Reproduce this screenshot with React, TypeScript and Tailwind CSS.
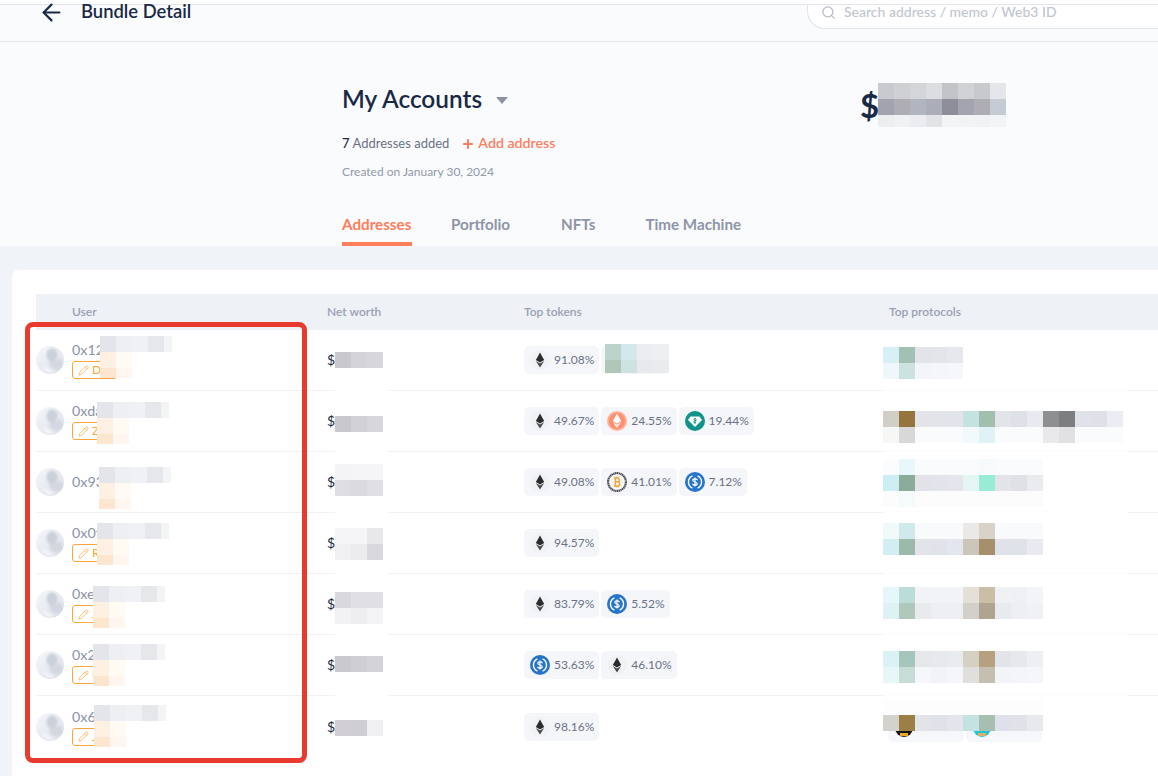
import { ArrowLeft, Pencil, Plus, Search } from "lucide-react";

type IconName = "eth" | "orange" | "gem" | "btc" | "usdc";

interface Token {
  icon: IconName;
  pct: string;
}

interface RowData {
  addr: string;
  badge?: string;
  userPos: string;
  tokens: Token[];
  worthPos: string;
  worth: string[][];
  protoPos: string;
  proto: string[][];
}

const EthShape = ({ top, bottom }: { top: string; bottom: string }) => (
  <>
    <path d="M10 2.500 5.800 10 10 12.600 14.200 10Z" fill={top} />
    <path d="M10 13.600 5.800 11 10 17.500 14.200 11Z" fill={bottom} />
  </>
);

const TokenIcon = ({ icon }: { icon: IconName }) => {
  if (icon === "eth")
    return (
      <svg viewBox="0 0 20 20" className="w-5 h-5 shrink-0">
        <circle cx="10" cy="10" r="10" fill="#f1f2f6" />
        <EthShape top="#2c2c2e" bottom="#4a4a4c" />
      </svg>
    );
  if (icon === "orange")
    return (
      <svg viewBox="0 0 20 20" className="w-5 h-5 shrink-0">
        <circle cx="10" cy="10" r="10" fill="#ffb296" />
        <circle cx="10" cy="10" r="8.200" fill="#ff906f" />
        <EthShape top="#ffffff" bottom="#ffe6dc" />
      </svg>
    );
  if (icon === "gem")
    return (
      <svg viewBox="0 0 20 20" className="w-5 h-5 shrink-0">
        <circle cx="10" cy="10" r="10" fill="#0d958c" />
        <path d="M5.500 5.500h9L17 9l-7 7-7-7Z" fill="#ffffff" />
        <path d="M10 7v6M8.600 8.600c0-1 2.800-1 2.800.2 0 1.300-2.800.6-2.800 2 0 1 2.800 1 2.800 0" stroke="#0d958c" strokeWidth="0.9" fill="none" />
      </svg>
    );
  if (icon === "btc")
    return (
      <svg viewBox="0 0 20 20" className="w-5 h-5 shrink-0">
        <circle cx="10" cy="10" r="8.900" fill="#ffffff" stroke="#4f4c56" strokeWidth="2.200" strokeDasharray="1.400 0.400" />
        <circle cx="10" cy="10" r="6.400" fill="#f5f3f0" />
        <path d="M8.400 6v8M8.400 6h2.200c2.200 0 2.200 3.800 0 3.800H8.400m2.200 0c2.600 0 2.600 4.200 0 4.200H8.400M7 6h1.400M7 14h1.400M9.400 4.800v1.200M9.400 14v1.200M11 4.800v1.200M11 14v1.200" stroke="#f2a33c" strokeWidth="1.400" fill="none" />
      </svg>
    );
  return (
    <svg viewBox="0 0 20 20" className="w-5 h-5 shrink-0">
      <circle cx="10" cy="10" r="10" fill="#2775ca" />
      <path d="M7.400 3.900a6.700 6.700 0 0 0 0 12.200M12.600 3.900a6.700 6.700 0 0 1 0 12.200" stroke="#ffffff" strokeWidth="1.400" fill="none" />
      <path d="M10 5.600v8.800M12.200 8.200c0-1.900-4.400-1.900-4.400 0 0 2.200 4.400 1.400 4.400 3.600 0 1.900-4.400 1.900-4.400 0" stroke="#ffffff" strokeWidth="1.200" fill="none" />
    </svg>
  );
};

const Avatar = () => (
  <svg viewBox="0 0 28 28" className="w-7 h-7 shrink-0">
    <defs>
      <linearGradient id="avatarBg" x1="0.1" y1="0.1" x2="0.85" y2="0.95">
        <stop offset="0" stopColor="#f3f5f9" />
        <stop offset="1" stopColor="#dde1e9" />
      </linearGradient>
      <filter id="avatarBlur" x="-20%" y="-20%" width="140%" height="140%">
        <feGaussianBlur stdDeviation="0.9" />
      </filter>
      <clipPath id="avatarClip">
        <circle cx="14" cy="14" r="14" />
      </clipPath>
    </defs>
    <circle cx="14" cy="14" r="14" fill="url(#avatarBg)" />
    <g clipPath="url(#avatarClip)" filter="url(#avatarBlur)">
      <ellipse cx="16" cy="9" rx="5.500" ry="6.500" fill="#cbd0d9" />
      <path d="M13 14c3 2 8 1 10-2 3 2 5 6 4 10l-7 1c-4 0-7-3-7-9Z" fill="#d3d7df" />
      <path d="M6 20c3 0 4 2 6 3 2 0 4 2 6 3-4 2-9 0-12-6Z" fill="#f6f7fa" />
    </g>
  </svg>
);

const Mosaic = ({ rows, className, lastRow = "h-4" }: { rows: string[][]; className: string; lastRow?: string }) => (
  <div className={`absolute flex flex-col ${className}`}>
    {rows.map((row, i) => (
      <div key={i} className={`flex ${i === rows.length - 1 ? lastRow : "h-4"}`}>
        {row.map((color, j) => (
          <div key={j} className={`w-4 h-full ${color}`} />
        ))}
      </div>
    ))}
  </div>
);

const UserMosaic = ({ className }: { className: string }) => (
  <div className={`absolute flex flex-col ${className}`}>
    <div className="flex h-4">
      <div className="w-4 bg-[#e4e5ea]" />
      <div className="w-4 bg-[#eeeff3]" />
      <div className="w-4 bg-[#f0f1f4]" />
      <div className="w-4 bg-[#e6e7eb]" />
      <div className="w-2 bg-[#f3f4f6]" />
    </div>
    <div className="flex h-4">
      <div className="w-4 bg-[#fef0e2]" />
      <div className="w-4 bg-[#fffaf3]" />
    </div>
    <div className="flex h-[10px]">
      <div className="w-4 bg-[#fde6d0]" />
      <div className="w-4 bg-[#fff7ef]" />
    </div>
  </div>
);

const rows: RowData[] = [
  {
    addr: "0x12",
    badge: "D",
    userPos: "left-[64px] top-[6px]",
    tokens: [{ icon: "eth", pct: "91.08%" }],
    worthPos: "left-[299px] top-[22px]",
    worth: [["bg-[#c9c8ce]", "bg-[#d3d3d8]", "bg-[#d6d6db]"]],
    protoPos: "left-[847px] top-[17px]",
    proto: [
      ["bg-[#d6f0f5]", "bg-[#a3c0b4]", "bg-[#e3e4e9]", "bg-[#e3e5ea]", "bg-[#e6e8ee]"],
      ["bg-[#eef8fb]", "bg-[#cae3df]", "bg-[#f4f5f9]", "bg-[#f5f6fa]", "bg-[#f6f7fb]"],
    ],
  },
  {
    addr: "0xda",
    badge: "Z",
    userPos: "left-[61px] top-[11px]",
    tokens: [
      { icon: "eth", pct: "49.67%" },
      { icon: "orange", pct: "24.55%" },
      { icon: "gem", pct: "19.44%" },
    ],
    worthPos: "left-[299px] top-[25px]",
    worth: [["bg-[#c9c8ce]", "bg-[#d2d1d7]", "bg-[#d6d6db]"]],
    protoPos: "left-[847px] top-[20px]",
    proto: [
      ["bg-[#d2cec8]", "bg-[#95743d]", "bg-[#e3e4e9]", "bg-[#e3e4ea]", "bg-[#e2e4ec]", "bg-[#c3e2e0]", "bg-[#a2bfae]", "bg-[#e3e4e9]", "bg-[#dfe1e8]", "bg-[#e9eaef]", "bg-[#8e8f91]", "bg-[#7d7e80]", "bg-[#e0e2ea]", "bg-[#e0e1e8]", "bg-[#ecedf2]"],
      ["bg-[#f7f7f6]", "bg-[#d8d8d8]", "bg-[#fafbfc]", "bg-[#fafbfc]", "bg-[#fafbfc]", "bg-[#f1f9fa]", "bg-[#dff3f6]", "bg-[#fafbfc]", "bg-[#fafbfc]", "bg-[#fafbfc]", "bg-[#e9e9eb]", "bg-[#e1e1e3]", "bg-[#fafbfc]", "bg-[#fafbfc]", "bg-[#fafbfc]"],
    ],
  },
  {
    addr: "0x93",
    userPos: "left-[63px] top-[15px]",
    tokens: [
      { icon: "eth", pct: "49.08%" },
      { icon: "btc", pct: "41.01%" },
      { icon: "usdc", pct: "7.12%" },
    ],
    worthPos: "left-[299px] top-[12px]",
    worth: [
      ["bg-[#f4f4f6]", "bg-[#f5f5f7]", "bg-[#f5f5f7]"],
      ["bg-[#dedde1]", "bg-[#dbdbdf]", "bg-[#e0dfe3]"],
    ],
    protoPos: "left-[847px] top-[7px]",
    proto: [
      ["bg-[#fbfcfd]", "bg-[#e8f7fb]", "bg-[#fafbfd]", "bg-[#fafbfd]", "bg-[#fafbfd]", "bg-[#fafbfd]", "bg-[#f6fafb]", "bg-[#fafbfd]", "bg-[#fafbfd]", "bg-[#fafbfd]"],
      ["bg-[#cdeef2]", "bg-[#8bac98]", "bg-[#e2e3e9]", "bg-[#e2e4ec]", "bg-[#e5e6ec]", "bg-[#e4f5f3]", "bg-[#98ecd5]", "bg-[#e3e4e9]", "bg-[#e0e1e6]", "bg-[#eaebef]"],
      ["bg-[#fcfcfc]", "bg-[#f5fbfb]", "bg-[#fcfcfc]", "bg-[#fcfcfc]", "bg-[#fcfcfc]", "bg-[#fcfcfc]", "bg-[#fcfcfc]", "bg-[#fcfcfc]", "bg-[#fcfcfc]", "bg-[#fcfcfc]"],
    ],
  },
  {
    addr: "0x0f",
    badge: "R",
    userPos: "left-[61px] top-[10px]",
    tokens: [{ icon: "eth", pct: "94.57%" }],
    worthPos: "left-[299px] top-[15px]",
    worth: [
      ["bg-[#f5f5f7]", "bg-[#f5f5f7]", "bg-[#e8e8eb]"],
      ["bg-[#f0f0f2]", "bg-[#ececef]", "bg-[#d8d8dd]"],
    ],
    protoPos: "left-[847px] top-[10px]",
    proto: [
      ["bg-[#f0fafb]", "bg-[#d0eaec]", "bg-[#f8fafc]", "bg-[#f8fafc]", "bg-[#f8fafc]", "bg-[#ebe9e7]", "bg-[#d9d2c8]", "bg-[#f8fafb]", "bg-[#f8fafb]", "bg-[#f8fafb]"],
      ["bg-[#d3eef2]", "bg-[#9db9a9]", "bg-[#e3e4e9]", "bg-[#e0e3ea]", "bg-[#e3e6ee]", "bg-[#ccc5b9]", "bg-[#a68f6c]", "bg-[#dfe2ea]", "bg-[#e0e2ea]", "bg-[#e9eaef]"],
    ],
  },
  {
    addr: "0xe",
    badge: "J",
    userPos: "left-[57px] top-[12px]",
    tokens: [
      { icon: "eth", pct: "83.79%" },
      { icon: "usdc", pct: "5.52%" },
    ],
    worthPos: "left-[299px] top-[18px]",
    worth: [
      ["bg-[#d9d8dd]", "bg-[#e0e0e4]", "bg-[#e0dfe4]"],
      ["bg-[#f2f2f4]", "bg-[#eeeef0]", "bg-[#f4f4f6]"],
    ],
    protoPos: "left-[847px] top-[13px]",
    proto: [
      ["bg-[#e6f7fb]", "bg-[#bcdcd7]", "bg-[#f2f3f7]", "bg-[#f2f3f7]", "bg-[#f2f3f7]", "bg-[#e4dfd7]", "bg-[#cbbea7]", "bg-[#f0f1f5]", "bg-[#eff0f4]", "bg-[#f3f4f8]"],
      ["bg-[#def2f5]", "bg-[#b0c8bc]", "bg-[#e9eaee]", "bg-[#eeeff3]", "bg-[#eeeff3]", "bg-[#d3d0ca]", "bg-[#aea48f]", "bg-[#e9eaef]", "bg-[#eeeff3]", "bg-[#f0f1f4]"],
    ],
  },
  {
    addr: "0x2",
    badge: "U",
    userPos: "left-[57px] top-[9px]",
    tokens: [
      { icon: "usdc", pct: "53.63%" },
      { icon: "eth", pct: "46.10%" },
    ],
    worthPos: "left-[299px] top-[21px]",
    worth: [["bg-[#c9c9ce]", "bg-[#cfced3]", "bg-[#d3d3d8]"]],
    protoPos: "left-[847px] top-[16px]",
    proto: [
      ["bg-[#daf1f5]", "bg-[#a7c6bb]", "bg-[#e5e7eb]", "bg-[#e8e9ed]", "bg-[#e8ecf0]", "bg-[#d6d0c3]", "bg-[#b5a180]", "bg-[#e3e4e9]", "bg-[#e7e8ec]", "bg-[#eeeff3]"],
      ["bg-[#e9f6f8]", "bg-[#c5dcd7]", "bg-[#f5f7fa]", "bg-[#f2f3f6]", "bg-[#f4f6f9]", "bg-[#e0dfdb]", "bg-[#c5bfb1]", "bg-[#f3f4f8]", "bg-[#f4f5f8]", "bg-[#f5f6fa]"],
    ],
  },
  {
    addr: "0x6",
    badge: "J",
    userPos: "left-[58px] top-[9px]",
    tokens: [{ icon: "eth", pct: "98.16%" }],
    worthPos: "left-[299px] top-[24px]",
    worth: [["bg-[#d2cfd4]", "bg-[#cfced3]", "bg-[#f0f0f2]"]],
    protoPos: "left-[847px] top-[3px]",
    proto: [
      ["bg-[#fdfdfd]", "bg-[#fdfdfd]", "bg-[#fdfdfd]", "bg-[#fdfdfd]", "bg-[#fdfdfd]", "bg-[#fdfdfd]", "bg-[#fdfdfd]", "bg-[#fdfdfd]", "bg-[#fdfdfd]", "bg-[#fdfdfd]"],
      ["bg-[#d4d2cd]", "bg-[#9c7e47]", "bg-[#e3e4e8]", "bg-[#e0e2ea]", "bg-[#e4e5ea]", "bg-[#c4e2e1]", "bg-[#a6bfb0]", "bg-[#dee1e9]", "bg-[#e1e2e7]", "bg-[#e8e9ed]"],
    ],
  },
];

const totalRows = [
  ["bg-[#c9cacf]", "bg-[#cfd0d3]", "bg-[#d4d5d9]", "bg-[#dcdde1]", "bg-[#c3c4c8]", "bg-[#d1d2d5]", "bg-[#c8c9cd]", "bg-[#e4e6ea]"],
  ["bg-[#a2a3ae]", "bg-[#aeadb3]", "bg-[#b1b5bf]", "bg-[#abaeb9]", "bg-[#8e8e9a]", "bg-[#a2a4af]", "bg-[#adadb3]", "bg-[#c6ccd5]"],
  ["bg-[#edeef0]", "bg-[#f0f1f2]", "bg-[#ebecef]", "bg-[#e2e3e6]", "bg-[#f3f4f6]", "bg-[#f2f3f5]", "bg-[#f1f2f4]", "bg-[#f3f4f5]"],
];

const tokenMosaic = [
  ["bg-[#bcd3cc]", "bg-[#d4e7ec]", "bg-[#ecedf2]", "bg-[#eeeff3]"],
  ["bg-[#b0c6b8]", "bg-[#cfe2e2]", "bg-[#e7e9ed]", "bg-[#eaebef]"],
];

const TokenPill = ({ icon, pct }: Token) => (
  <div className="flex items-center h-7 pl-1.5 pr-[5px] gap-1 rounded-[5px] bg-[#f5f6fa]">
    <TokenIcon icon={icon} />
    <span className="text-xs text-[#6a7187]">{pct}</span>
  </div>
);

const Row = ({ row, index }: { row: RowData; index: number }) => {
  const last = index === rows.length - 1;
  return (
    <div className={`relative grid grid-cols-[291px_197px_360px_1fr] h-[61px] items-center ${last ? "" : "border-b border-[#f0f1f6]"}`}>
      <div className="flex items-center gap-2">
        <Avatar />
        <div className="flex flex-col gap-px pb-px">
          <span className="text-[14.300px] leading-5 text-[#8b93a7]">{row.addr}</span>
          {row.badge && (
            <div className="flex items-center gap-[3px] w-[45px] h-[18px] pl-[5px] rounded-[3px] border border-[#ffa53a] text-xs text-[#ffa53a]">
              <Pencil size={11} strokeWidth={1.5} />
              <span>{row.badge}</span>
            </div>
          )}
        </div>
      </div>
      <span className="text-sm text-[#192945]">$</span>
      <div className="flex gap-0.5">
        {row.tokens.map((t, i) => (
          <TokenPill key={i} icon={t.icon} pct={t.pct} />
        ))}
        {index === 0 && <div className="w-[68px] h-7 rounded-[5px] bg-[#f5f6fa]" />}
      </div>
      {last ? (
        <div className="flex gap-0.5 ml-1 pt-[2px]">
          <div className="flex items-center w-[76px] h-7 pl-[7px] rounded-[5px] bg-[#f6f7fb]">
            <div className="flex justify-center items-end w-[18px] h-[19px] pb-px rounded-full bg-[#141414]">
              <div className="w-2 h-[3px] bg-[#e9a825]" />
            </div>
          </div>
          <div className="flex items-center w-[76px] h-7 pl-[7px] rounded-[5px] bg-[#f6f7fb]">
            <div className="flex justify-center items-end w-[18px] h-[19px] pb-px rounded-full bg-[#22c4d6]">
              <div className="w-2 h-[3px] bg-[#d9b26a]" />
            </div>
          </div>
        </div>
      ) : (
        <div />
      )}

      {!last && (
        <>
          <div className="absolute left-[299px] -bottom-px w-[53px] h-[2px] bg-white" />
          <div className="absolute left-[847px] -bottom-px w-[245px] h-[2px] bg-[#fdfdfd]" />
        </>
      )}

      <UserMosaic className={row.userPos} />
      <Mosaic rows={row.worth} className={row.worthPos} />
      {index === 0 && <Mosaic rows={tokenMosaic} className="left-[569px] top-[14px]" lastRow="h-[13px]" />}
      <Mosaic rows={row.proto} className={row.protoPos} />
    </div>
  );
};

export default function App() {
  return (
    <div className="relative w-full h-[776px] overflow-hidden bg-[#f0f3f7] font-['Lato',sans-serif]">
      <div className="h-1 bg-white" />

      <header className="flex items-start h-[38px] border-y border-[#e3e5ec] bg-[#fafbfd]">
        <div className="flex items-start pl-[38px] -mt-[6px]">
          <ArrowLeft size={27} strokeWidth={1.9} className="text-[#192945] shrink-0" />
          <span className="ml-4 mt-[3px] text-[18.400px] font-semibold leading-none text-[#192945]">Bundle Detail</span>
        </div>
        <div className="flex items-start gap-2 w-[351px] h-6 ml-auto pl-[13px] rounded-bl-[18px] border-l border-b border-[#e3e5ec] bg-white">
          <Search size={15} strokeWidth={2} className="text-[#b6bac6] shrink-0" />
          <span className="text-sm font-medium leading-none text-[#c2c6d1]">Search address / memo / Web3 ID</span>
        </div>
      </header>

      <section className="h-[204px] pl-[342px] bg-[#fafbfd]">
        <div className="flex h-[155px]">
          <div className="w-[519px] pt-[39px]">
            <div className="flex items-center gap-[14px] h-9">
              <h1 className="text-[24.400px] font-semibold text-[#192945]">My Accounts</h1>
              <div className="w-0 h-0 mt-0.5 border-x-[6.500px] border-t-[7px] border-x-transparent border-t-[#8c92a3]" />
            </div>
            <div className="flex items-center mt-[17px] h-5 text-[13px]">
              <span className="text-[#192945] font-medium">7</span>
              <span className="ml-[3px] text-[#6a7187]">Addresses added</span>
              <Plus size={14} strokeWidth={3.500} className="ml-3 -mt-px text-[#ff7d5c]" />
              <span className="ml-[3px] -mt-0.5 text-[14.200px] font-semibold text-[#ff7d5c]">Add address</span>
            </div>
            <div className="mt-[10px] text-xs leading-4 text-[#9299a9]">Created on January 30, 2024</div>
          </div>
          <div className="relative pt-[41px]">
            <span className="-ml-px text-[33px] leading-[44px] font-bold text-[#192945]">$</span>
            <Mosaic rows={totalRows} className="left-[17px] top-[41px]" lastRow="h-3" />
          </div>
        </div>
        <nav className="flex h-[49px] text-[15.200px] font-bold text-[#8e95a6]">
          <div className="pt-4 w-[70px] text-[#ff7d5c] border-b-4 border-[#ff7f5c]">Addresses</div>
          <div className="ml-[39px] pt-4">Portfolio</div>
          <div className="ml-[51px] pt-4">NFTs</div>
          <div className="ml-[50px] pt-4">Time Machine</div>
        </nav>
      </section>

      <section className="mt-6 ml-3 h-[506px] pl-6 pt-6 rounded-tl-md bg-white">
        <div className="grid grid-cols-[291px_197px_360px_1fr] items-center h-9 bg-[#eef1f6] text-xs font-semibold text-[#9aa1b2]">
          <span className="pl-9">User</span>
          <span>Net worth</span>
          <span>Top tokens</span>
          <span className="pl-[5px]">Top protocols</span>
        </div>
        {rows.map((row, i) => (
          <Row key={i} row={row} index={i} />
        ))}
      </section>

      <div className="absolute left-[25px] top-[322px] w-[282px] h-[441px] border-[5px] border-[#e83a2f] rounded-lg" />
    </div>
  );
}
